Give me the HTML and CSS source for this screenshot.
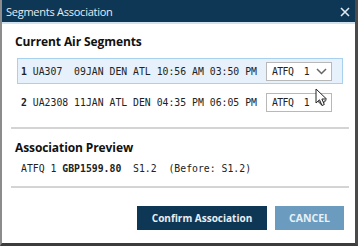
FILE: index.html
```html
<!DOCTYPE html>
<html>
<head>
<meta charset="utf-8">
<link rel="stylesheet" href="styles.css">
</head>
<body>
<div class="dialog">
  <div class="titlebar">
    <span class="title">Segments Association</span>
    <svg class="close" width="10" height="10" viewBox="0 0 10 10"><path d="M1 1L9 9M9 1L1 9" stroke="#dfe8ef" stroke-width="1.6"/></svg>
  </div>
  <div class="content">
    <h2 class="heading">Current Air Segments</h2>
    <div class="seg selected">
      <span class="segtext"><b>1</b> UA307  09JAN DEN ATL 10:56 AM 03:50 PM</span>
      <div class="select"><span class="opt">ATFQ  1</span><svg width="11" height="7" viewBox="0 0 11 7"><path d="M1 1L5.5 5.5L10 1" fill="none" stroke="#666" stroke-width="1.5"/></svg></div>
    </div>
    <div class="seg">
      <span class="segtext"><b>2</b> UA2308 11JAN ATL DEN 04:35 PM 06:05 PM</span>
      <div class="select"><span class="opt">ATFQ  1</span><svg width="11" height="7" viewBox="0 0 11 7"><path d="M1 1L5.5 5.5L10 1" fill="none" stroke="#666" stroke-width="1.5"/></svg></div>
    </div>
    <hr class="sep">
    <h2 class="heading">Association Preview</h2>
    <div class="preview">ATFQ 1 <b>GBP1599.80</b>  S1.2  (Before: S1.2)</div>
    <hr class="sep">
    <div class="actions">
      <button class="btn primary">Confirm Association</button>
      <button class="btn cancel">CANCEL</button>
    </div>
  </div>
  <svg class="cursor" width="14" height="20" viewBox="0 0 14 20"><path d="M1 1L1 15L4.5 11.8L7 17.5L9.3 16.5L6.9 11H11.5Z" fill="#fff" stroke="#222" stroke-width="1"/></svg>
</div>
</body>
</html>
```
FILE: styles.css
```css
html, body { margin: 0; padding: 0; background: #fff; }
.dialog {
  position: relative;
  width: 358px;
  height: 246px;
  box-sizing: border-box;
  border-left: 2px solid #8c8c8c;
  border-right: 3px solid #4a4a4a;
  border-bottom: 3px solid #3c3c3c;
  background: #fff;
  overflow: hidden;
  font-family: "Open Sans", "Noto Sans", sans-serif;
}
.titlebar {
  height: 22px;
  background: #0e3755;
  border-bottom: 2px solid #cfe0ee;
  display: flex;
  align-items: center;
  justify-content: space-between;
  padding: 0 8px 0 6px;
  margin-left: -2px;
  margin-right: -3px;
}
.title { color: #e6edf3; font-size: 11px; letter-spacing: -0.25px; }
.close { margin-top: 1px; }
.content { padding: 9px 13px 0 13px; }
.heading {
  margin: 0 0 8px 0;
  font-size: 12px;
  font-weight: 700;
  color: #111;
  letter-spacing: -0.1px;
}
.seg {
  display: flex;
  align-items: center;
  justify-content: space-between;
  height: 24px;
  padding: 0 10px 0 3px;
  margin: 0 -1px 5px 2px;
  border: 1px solid transparent;
  font-family: "DejaVu Sans Mono", monospace;
  font-size: 9.8px;
  color: #222;
  white-space: pre;
}
.seg.selected { background: #e6f1fb; border-color: #a8d0ef; }
.select {
  width: 66px;
  height: 19px;
  box-sizing: border-box;
  border: 1px solid #b8b8b8;
  background: #fff;
  display: flex;
  align-items: center;
  padding: 0 4px 0 5px;
  white-space: pre;
}
.select svg { margin-left: auto; margin-top: 1px; }
.opt { letter-spacing: -0.6px; }
.sep { border: 0; border-top: 2px solid #d4d4d4; margin: 12px -7px 10px -4px; }
.preview {
  font-family: "DejaVu Sans Mono", monospace;
  font-size: 9.8px;
  color: #222;
  white-space: pre;
  padding-left: 6px;
  margin-top: -1px;
}
.actions { display: flex; justify-content: flex-end; gap: 8px; margin-right: -2px; margin-top: 18px; }
.btn {
  height: 24px;
  border: 0;
  font-family: "Open Sans", sans-serif;
  font-weight: 700;
  font-size: 10px;
  padding: 0;
}
.primary { width: 130px; background: #0e3755; color: #e9eff4; }
.cancel { width: 69px; background: #6b9cc0; color: #e8f0f6; font-size: 10.5px; }
.cursor { position: absolute; left: 313px; top: 88px; }
```
